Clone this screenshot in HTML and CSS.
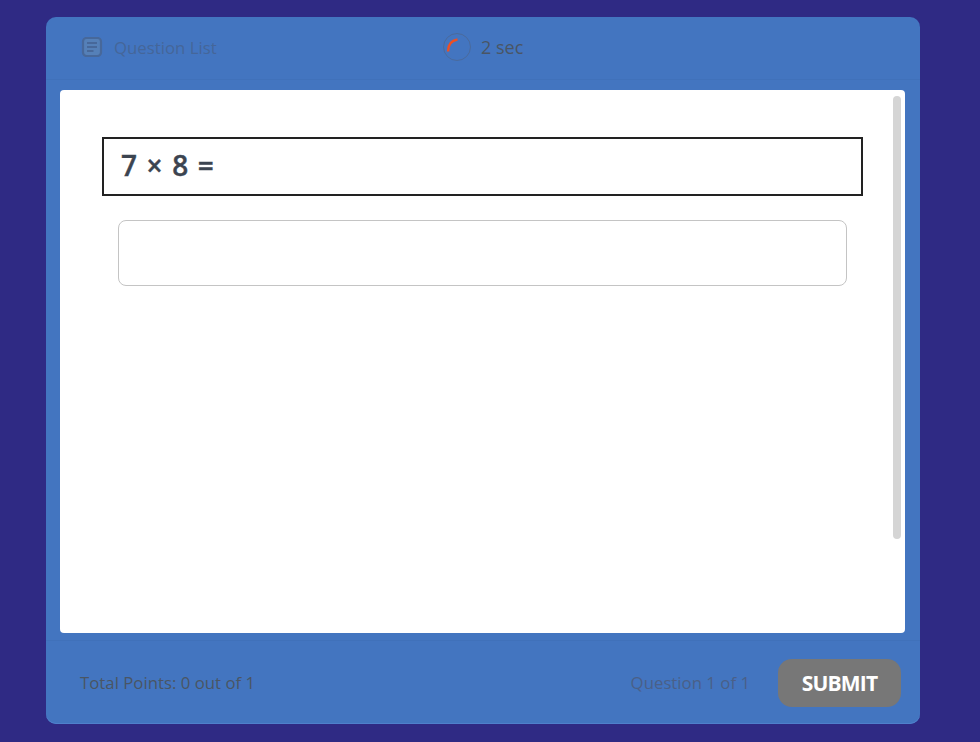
FILE: index.html
```html
<!DOCTYPE html>
<html>
<head>
  <link rel="stylesheet" href="styles.css">
  <title>Quiz</title>
  <meta charset="UTF-8">
</head>
<body>
  <div class="card">
    <div class="top-bar">
      <div class="question-list">
        <svg class="list-icon" width="22" height="20" viewBox="0 0 22 20">
          <rect x="2" y="1" width="18" height="18" rx="3.5" fill="#5580b8" stroke="#47689a" stroke-width="2.2"/>
          <rect x="6" y="5" width="10" height="2" fill="#47689a"/>
          <rect x="6" y="9" width="10" height="2" fill="#47689a"/>
          <rect x="6" y="13" width="6.5" height="2" fill="#47689a"/>
        </svg>
        <span>Question List</span>
      </div>
      <div class="timer">
        <svg width="30" height="30" viewBox="0 0 30 30">
          <circle cx="15" cy="15" r="13.5" fill="none" stroke="#4a6a9c" stroke-width="1"/>
          <path d="M6 19.5 Q6 9 15.5 7.5" fill="none" stroke="#ef4f23" stroke-width="2.4"/>
        </svg>
        <span>2 sec</span>
      </div>
    </div>
    <div class="panel">
      <div class="scroll-thumb"></div>
      <div class="question">7 × 8 =</div>
      <input class="answer" type="text">
    </div>
    <div class="bottom-bar">
      <span class="points">Total Points: 0 out of 1</span>
      <div class="bottom-right">
        <span class="progress">Question 1 of 1</span>
        <button class="submit">SUBMIT</button>
      </div>
    </div>
  </div>
</body>
</html>
```

FILE: styles.css
```css
html, body {
  margin: 0;
  height: 100%;
}
body {
  background: #2f2a84;
  font-family: "Open Sans", sans-serif;
  padding: 17px 60px 18px 46px;
  box-sizing: border-box;
  overflow: hidden;
}
.card {
  height: 707px;
  background: #4375c0;
  border-radius: 10px;
  box-shadow: inset 0 -1px 0 #4f80cc;
  display: flex;
  flex-direction: column;
}
.top-bar {
  height: 60px;
  flex: none;
  padding: 0 0 2px 35px;
  border-bottom: 1px solid #4071ba;
  display: flex;
  align-items: center;
}
.question-list {
  width: 361px;
  display: flex;
  align-items: center;
  gap: 11px;
  font-size: 16.8px;
  color: #456699;
}
.timer {
  display: flex;
  align-items: center;
  gap: 9px;
  font-size: 18px;
  color: #4a5564;
}
.panel {
  position: relative;
  height: 543px;
  flex: none;
  margin: 10px 15px 0 14px;
  padding: 47px 42px 0;
  box-sizing: border-box;
  background: #fff;
  border-radius: 4px;
}
.scroll-thumb {
  position: absolute;
  top: 6px;
  right: 4px;
  width: 8px;
  height: 443px;
  background: #d5d5d5;
  border-radius: 4px;
}
.question {
  width: 761px;
  height: 59px;
  box-sizing: border-box;
  border: 2px solid #222;
  padding-left: 17px;
  font-size: 28px;
  font-weight: 600;
  line-height: 52px;
  color: #3c4450;
  word-spacing: 2.3px;
  -webkit-text-stroke: 0.4px #3c4450;
}
.answer {
  display: block;
  width: 729px;
  height: 66px;
  box-sizing: border-box;
  margin: 24px 0 0 16px;
  border: 1px solid #c4c4c4;
  border-radius: 8px;
  background: #fff;
}
.bottom-bar {
  flex: 1;
  margin-top: 7px;
  border-top: 1px solid #4071ba;
  display: flex;
  align-items: center;
  justify-content: space-between;
  padding: 0 19px 0 34px;
}
.points {
  font-size: 16.8px;
  color: #4a5564;
}
.bottom-right {
  display: flex;
  align-items: center;
  gap: 28px;
}
.progress {
  font-size: 16.8px;
  color: #4a6088;
}
.submit {
  width: 123px;
  height: 48px;
  border: none;
  border-radius: 14px;
  background: #777;
  color: #fff;
  font-family: "Open Sans", sans-serif;
  font-size: 21px;
  font-weight: 700;
  letter-spacing: -0.8px;
}
```
